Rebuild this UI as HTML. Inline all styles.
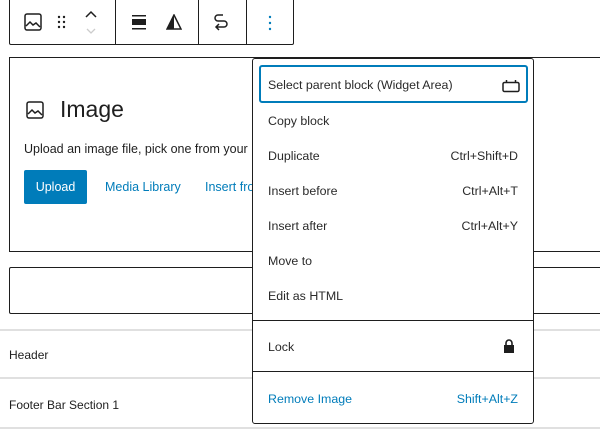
<!DOCTYPE html>
<html><head><meta charset="utf-8">
<style>
*{box-sizing:border-box;margin:0;padding:0}
body{width:600px;height:430px;overflow:hidden;background:#fff;font-family:"Liberation Sans",sans-serif;color:#1e1e1e;position:relative}
.abs{position:absolute}
.tb{left:9px;top:-2px;width:285px;height:47px;border:1px solid #1e1e1e;border-radius:2px}
.div{top:0;width:1px;height:45px;background:#1e1e1e}
.blk{left:9px;top:57px;width:600px;height:195px;border:1px solid #1e1e1e;border-right:none}
.box2{left:9px;top:267px;width:600px;height:47px;border:1px solid #1e1e1e;border-right:none;border-radius:2px}
.hr{left:0;width:600px;height:2px;background:#e0e0e0}
.menu{left:252px;top:58px;width:282px;height:366px;border:1px solid #1e1e1e;border-radius:3px;background:#fff;font-size:12.4px;color:#2a2a2a}
.it{position:absolute;left:15px;right:15px;display:flex;justify-content:space-between;line-height:14px}
.sel{left:6px;top:6px;width:269px;height:38px;border:2px solid #007cba;border-radius:3px}
.mdiv{left:0;width:280px;height:1px;background:#1e1e1e}
.sm{font-size:12px}
</style></head><body>
<div class="abs tb"></div>
<div class="abs div" style="left:115px"></div>
<div class="abs div" style="left:198px"></div>
<div class="abs div" style="left:246px"></div>
<svg class="abs" style="left:24px;top:13px" width="18" height="18" viewBox="0 0 18 18"><rect x="1" y="1" width="16" height="16" rx="2" fill="none" stroke="#1e1e1e" stroke-width="1.5"/><path d="M2 13l4-4 3 3 3-2 4 4" fill="none" stroke="#1e1e1e" stroke-width="1.5"/></svg>
<svg class="abs" style="left:57px;top:15px" width="10" height="16"><g fill="#1e1e1e"><circle cx="2" cy="2" r="1.2"/><circle cx="7" cy="2" r="1.2"/><circle cx="2" cy="7" r="1.2"/><circle cx="7" cy="7" r="1.2"/><circle cx="2" cy="12" r="1.2"/><circle cx="7" cy="12" r="1.2"/></g></svg>
<svg class="abs" style="left:84px;top:10px" width="14" height="26"><path d="M2 7l5-5 5 5" fill="none" stroke="#1e1e1e" stroke-width="1.5"/><path d="M3 19l4 4 4-4" fill="none" stroke="#ccc" stroke-width="1.3"/></svg>
<svg class="abs" style="left:131px;top:15px" width="16" height="16"><rect x="1" y="0" width="14" height="1.5" fill="#1e1e1e"/><rect x="1" y="4" width="14" height="6" fill="#1e1e1e"/><rect x="1" y="13" width="14" height="1.5" fill="#1e1e1e"/></svg>
<svg class="abs" style="left:166px;top:14px" width="16" height="16"><path d="M8 1L1 15h14z" fill="none" stroke="#1e1e1e" stroke-width="1.5"/><path d="M8 1v14H1z" fill="#1e1e1e"/></svg>
<svg class="abs" style="left:212px;top:12px" width="18" height="20"><path d="M11 3H6a3 3 0 0 0 0 6h6a3 3 0 0 1 0 6H5M7 12l-3 3 3 3" fill="none" stroke="#1e1e1e" stroke-width="1.5"/></svg>
<svg class="abs" style="left:268px;top:14px" width="4" height="18"><g fill="#007cba"><circle cx="2" cy="3" r="1.2"/><circle cx="2" cy="9" r="1.2"/><circle cx="2" cy="15" r="1.2"/></g></svg>

<div class="abs blk"></div>
<svg class="abs" style="left:26px;top:101px" width="18" height="18" viewBox="0 0 18 18"><rect x="1" y="1" width="16" height="16" rx="2" fill="none" stroke="#1e1e1e" stroke-width="1.5"/><path d="M2 13l4-4 3 3 3-2 4 4" fill="none" stroke="#1e1e1e" stroke-width="1.5"/></svg>
<div class="abs" style="left:60px;top:96px;font-size:23px">Image</div>
<div class="abs" style="left:24px;top:142px;font-size:12.5px;white-space:nowrap">Upload an image file, pick one from your media library, or add one with a URL.</div>
<div class="abs" style="left:24px;top:170px;width:63px;height:34px;background:#007cba;border-radius:2px;color:#fff;font-size:12.5px;line-height:34px;text-align:center">Upload</div>
<div class="abs" style="left:105px;top:180px;font-size:12.5px;color:#007cba">Media Library</div>
<div class="abs" style="left:205px;top:180px;font-size:12.5px;color:#007cba;white-space:nowrap">Insert from URL</div>

<div class="abs box2"></div>
<div class="abs hr" style="top:329px"></div>
<div class="abs sm" style="left:9px;top:348px">Header</div>
<div class="abs hr" style="top:377px"></div>
<div class="abs sm" style="left:9px;top:398px">Footer Bar Section 1</div>
<div class="abs hr" style="top:427px"></div>

<div class="abs menu">
<div class="abs sel"></div>
<div class="it" style="top:19px"><span>Select parent block (Widget Area)</span></div>
<svg class="abs" style="left:249px;top:20px" width="18" height="14"><rect x="1" y="3.5" width="16" height="9" rx="1.5" fill="none" stroke="#1e1e1e" stroke-width="1.5"/><path d="M4.5 1v3M13.5 1v3" stroke="#1e1e1e" stroke-width="1.5"/></svg>
<div class="it" style="top:55px"><span>Copy block</span></div>
<div class="it" style="top:90px"><span>Duplicate</span><span>Ctrl+Shift+D</span></div>
<div class="it" style="top:125px"><span>Insert before</span><span>Ctrl+Alt+T</span></div>
<div class="it" style="top:160px"><span>Insert after</span><span>Ctrl+Alt+Y</span></div>
<div class="it" style="top:195px"><span>Move to</span></div>
<div class="it" style="top:230px"><span>Edit as HTML</span></div>
<div class="abs mdiv" style="top:261px"></div>
<div class="it" style="top:281px"><span>Lock</span></div>
<svg class="abs" style="left:250px;top:279px" width="12" height="16"><path d="M3 7V5a3 3 0 0 1 6 0v2" fill="none" stroke="#1e1e1e" stroke-width="1.6"/><rect x="1" y="7" width="10" height="8" fill="#1e1e1e"/></svg>
<div class="abs mdiv" style="top:312px"></div>
<div class="it" style="top:333px;color:#007cba"><span>Remove Image</span><span>Shift+Alt+Z</span></div>
</div>
</body></html>
